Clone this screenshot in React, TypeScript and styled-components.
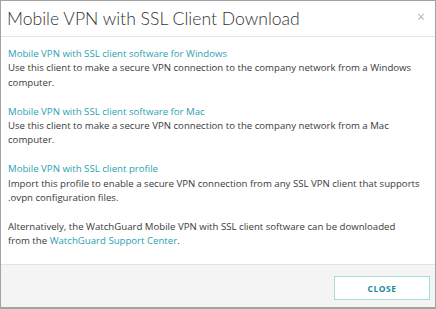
import React from 'react';
import styled, {createGlobalStyle} from 'styled-components';

const GlobalStyle = createGlobalStyle`
  html, body {
    margin: 0;
    padding: 0;
    background: #ffffff;
  }
  * {
    box-sizing: border-box;
  }
`

const Modal = styled.div`
  width: 436px;
  height: 309px;
  border: 1px solid #a3a3a3;
  border-bottom-width: 2px;
  background: #ffffff;
  display: flex;
  flex-direction: column;
  font-family: "Open Sans", "Liberation Sans", sans-serif;
`

const Header = styled.div`
  height: 36px;
  padding: 0 10px 0 6px;
  display: flex;
  align-items: center;
  justify-content: space-between;
  border-bottom: 1px solid #e5e5e5;
`

const Title = styled.h1`
  margin: 0;
  font-family: "Lato", "Open Sans", sans-serif;
  font-weight: 300;
  font-size: 17.6px;
  color: #333333;
`

const CloseX = styled.span`
  font-size: 14px;
  line-height: 1;
  color: #b5b5b5;
  margin-top: -4px;
`

const Body = styled.div`
  flex: 1;
  padding: 10px 6px 0 7px;
`

const Block = styled.p`
  margin: 0 0 14.4px;
  font-size: 9.65px;
  line-height: 14.4px;
  color: #3a3a3a;
`

const Link = styled.a<{block?: boolean}>`
  color: #2a9fb2;
  text-decoration: none;
  display: ${props => props.block ? 'block' : 'inline'};
`

const Footer = styled.div`
  height: 43px;
  background: #f4f4f4;
  border-top: 1px solid #e2e2e2;
  display: flex;
  align-items: center;
  justify-content: flex-end;
  padding: 4px 5px 0 0;
`

const Button = styled.button`
  width: 96px;
  height: 24px;
  background: #ffffff;
  border: 1px solid #a6dcdc;
  color: #1c8a9c;
  font-family: "Open Sans", "Liberation Sans", sans-serif;
  font-weight: 700;
  font-size: 8.5px;
  letter-spacing: 0.5px;
  cursor: pointer;
`

const items = [
    {
        link: 'Mobile VPN with SSL client software for Windows',
        text: 'Use this client to make a secure VPN connection to the company network from a Windows computer.'
    },
    {
        link: 'Mobile VPN with SSL client software for Mac',
        text: 'Use this client to make a secure VPN connection to the company network from a Mac computer.'
    },
    {
        link: 'Mobile VPN with SSL client profile',
        text: 'Import this profile to enable a secure VPN connection from any SSL VPN client that supports .ovpn configuration files.'
    },
]

export default function App() {
    return (
        <>
            <GlobalStyle/>
            <Modal>
                <Header>
                    <Title>Mobile VPN with SSL Client Download</Title>
                    <CloseX>×</CloseX>
                </Header>
                <Body>
                    {items.map(i => (
                        <Block key={i.link}>
                            <Link block href="#">{i.link}</Link>
                            {i.text}
                        </Block>
                    ))}
                    <Block>
                        Alternatively, the WatchGuard Mobile VPN with SSL client software can be downloaded
                        <br/>
                        from the <Link href="#">WatchGuard Support Center</Link>.
                    </Block>
                </Body>
                <Footer>
                    <Button>CLOSE</Button>
                </Footer>
            </Modal>
        </>
    );
}
